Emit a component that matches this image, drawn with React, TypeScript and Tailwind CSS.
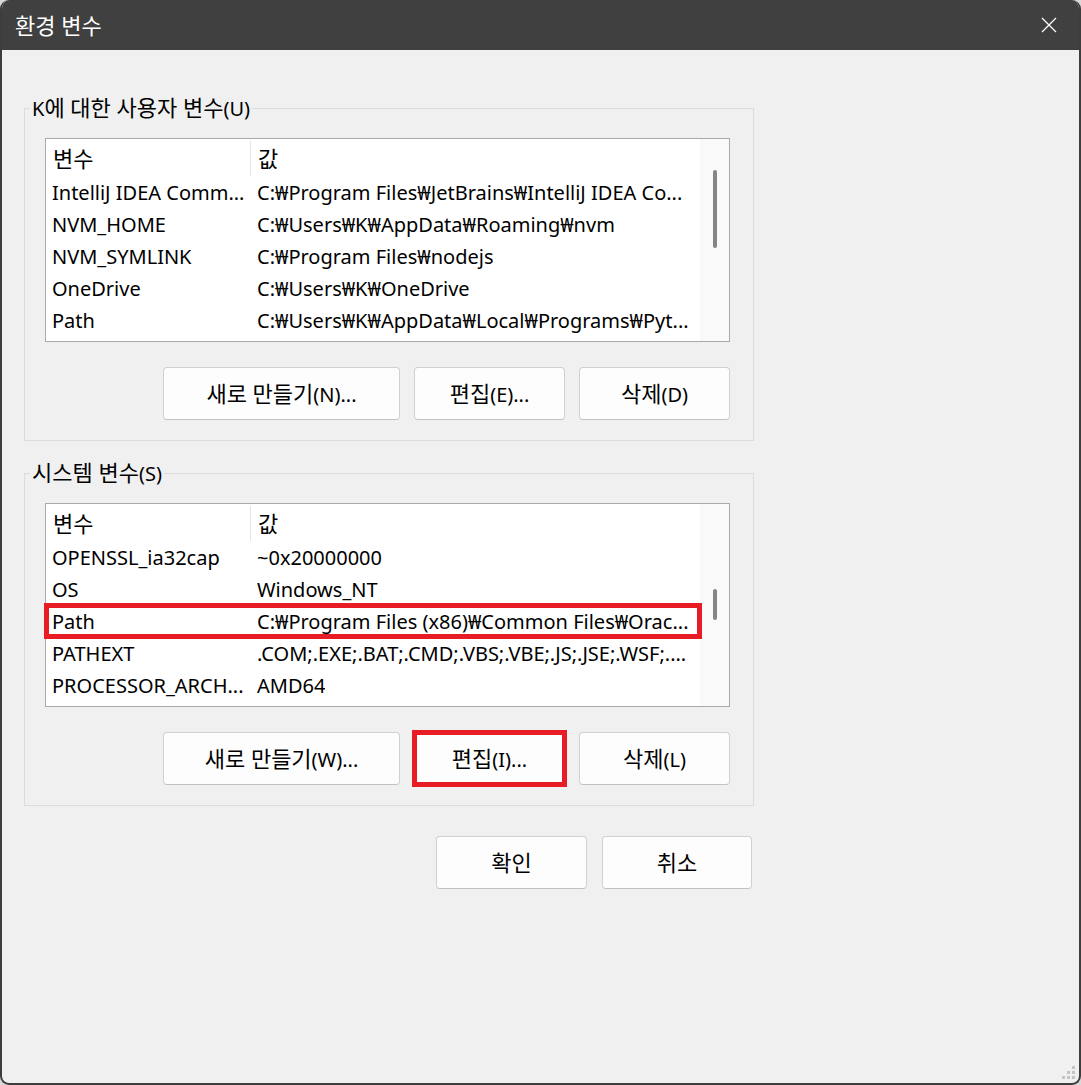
import React from 'react';

type Row = { name: string; value: string; selected?: boolean };

const USER_VARS: Row[] = [
  { name: 'IntelliJ IDEA Comm...', value: 'C:₩Program Files₩JetBrains₩IntelliJ IDEA Co...' },
  { name: 'NVM_HOME', value: 'C:₩Users₩K₩AppData₩Roaming₩nvm' },
  { name: 'NVM_SYMLINK', value: 'C:₩Program Files₩nodejs' },
  { name: 'OneDrive', value: 'C:₩Users₩K₩OneDrive' },
  { name: 'Path', value: 'C:₩Users₩K₩AppData₩Local₩Programs₩Pyt...' },
];

const SYSTEM_VARS: Row[] = [
  { name: 'OPENSSL_ia32cap', value: '~0x20000000' },
  { name: 'OS', value: 'Windows_NT' },
  { name: 'Path', value: 'C:₩Program Files (x86)₩Common Files₩Orac...', selected: true },
  { name: 'PATHEXT', value: '.COM;.EXE;.BAT;.CMD;.VBS;.VBE;.JS;.JSE;.WSF;....' },
  { name: 'PROCESSOR_ARCH...', value: 'AMD64' },
];

const FONT = { fontFamily: '"Noto Sans", "Noto Sans CJK KR", sans-serif' };

// Hangul in the original font is noticeably larger than its Latin, so Korean runs get a bigger size
const Ko = ({ children }: { children: React.ReactNode }) => <span className="text-[22px]">{children}</span>;

const VarList = ({ rows, thumbTop, thumbHeight }: { rows: Row[]; thumbTop: string; thumbHeight: string }) => (
  <div className="flex h-[204px] w-[685px] border border-[#a9a9a9] bg-white">
    {/* scrollbar first in DOM order is avoided; the list column is raised so the red frame stays on top */}
    <div className="relative z-10 flex-1">
      {/* header */}
      <div className="flex h-[37px] items-center pt-[2px]">
        <div className="flex h-full w-[205px] items-center border-r border-[#e5e5e5] pl-[7px]">
          <Ko>변수</Ko>
        </div>
        <div className="pl-[7px]">
          <Ko>값</Ko>
        </div>
      </div>
      {rows.map((r, i) => (
        <div
          key={i}
          className={`flex h-[32px] items-center whitespace-nowrap pt-[1px] ${
            r.selected ? 'shadow-[0_0_0_2px_#e81c24,inset_0_0_0_3px_#e81c24]' : ''
          }`}
        >
          <div className="w-[205px] overflow-hidden pl-[6px]">{r.name}</div>
          <div className="overflow-hidden pl-[6px]">{r.value}</div>
        </div>
      ))}
    </div>
    {/* scrollbar */}
    <div className="relative w-[29px] bg-[#f9f9f9]">
      <div className={`absolute left-[13px] w-[4px] rounded-full bg-[#858585] ${thumbTop} ${thumbHeight}`}></div>
    </div>
  </div>
);

const Btn = ({ children, w, highlight }: { children: React.ReactNode; w: string; highlight?: boolean }) => (
  <button
    className={`${w} h-[53px] border bg-[#fdfdfd] text-[20px] text-black ${
      highlight
        ? 'border-[#e81c24] shadow-[0_0_0_2px_#e81c24,inset_0_0_0_2px_#e81c24]'
        : 'rounded-[4px] border-[#d0d0d0] border-b-[#c2c2c2]'
    }`}
  >
    {children}
  </button>
);

const Group = ({
  title,
  rows,
  thumbTop,
  thumbHeight,
  buttons,
}: {
  title: React.ReactNode;
  rows: Row[];
  thumbTop: string;
  thumbHeight: string;
  buttons: React.ReactNode;
}) => (
  <fieldset className="w-[730px] border border-[#dcdcdc] pb-[20px] pl-[20px] pr-[23px]">
    <legend className="-ml-[15px] px-[2px] text-[20px] leading-[26px]">{title}</legend>
    <div className="mt-[16px]">
      <VarList rows={rows} thumbTop={thumbTop} thumbHeight={thumbHeight} />
    </div>
    <div className="mt-[25px] flex justify-end gap-[14px]">{buttons}</div>
  </fieldset>
);

export default function App() {
  return (
    <div className="h-[1085px] w-[1081px] bg-[#d9d9d9]" style={FONT}>
      <div className="flex h-full w-full flex-col overflow-hidden rounded-[9px] border-2 border-t-0 border-[#3d3d3d] bg-[#f0f0f0] text-[20px] text-black">
        {/* title bar */}
        <div className="flex h-[50px] shrink-0 items-center justify-between bg-[#404040] pl-[13px] pr-[20px] text-white">
          <span className="text-[22px]">환경 변수</span>
          <svg width="16" height="16" viewBox="0 0 16 16" className="mr-[2px]">
            <path d="M1 1 L15 15 M15 1 L1 15" stroke="#ffffff" strokeWidth="1.3" />
          </svg>
        </div>

        <div className="relative flex flex-1 flex-col pl-[22px] pt-[44px]">
          <Group
            title={
              <>
                K<Ko>에 대한 사용자 변수</Ko>(U)
              </>
            }
            rows={USER_VARS}
            thumbTop="top-[31px]"
            thumbHeight="h-[78px]"
            buttons={
              <>
                <Btn w="w-[237px]">
                  <Ko>새로 만들기</Ko>(N)...
                </Btn>
                <Btn w="w-[151px]">
                  <Ko>편집</Ko>(E)...
                </Btn>
                <Btn w="w-[151px]">
                  <Ko>삭제</Ko>(D)
                </Btn>
              </>
            }
          />
          <div className="mt-[18px]">
            <Group
              title={
                <>
                  <Ko>시스템 변수</Ko>(S)
                </>
              }
              rows={SYSTEM_VARS}
              thumbTop="top-[85px]"
              thumbHeight="h-[31px]"
              buttons={
                <>
                  <Btn w="w-[237px]">
                    <Ko>새로 만들기</Ko>(W)...
                  </Btn>
                  <Btn w="w-[151px]" highlight>
                    <Ko>편집</Ko>(I)...
                  </Btn>
                  <Btn w="w-[151px]">
                    <Ko>삭제</Ko>(L)
                  </Btn>
                </>
              }
            />
          </div>
          <div className="mt-[30px] flex w-[728px] justify-end gap-[15px]">
            <Btn w="w-[151px]">
              <Ko>확인</Ko>
            </Btn>
            <Btn w="w-[150px]">
              <Ko>취소</Ko>
            </Btn>
          </div>

          {/* resize grip */}
          <svg width="14" height="14" viewBox="0 0 14 14" className="absolute bottom-[3px] right-[3px]">
            <rect x="10" y="0" width="3" height="3" fill="#c4c4c4" />
            <rect x="5" y="5" width="3" height="3" fill="#c4c4c4" />
            <rect x="10" y="5" width="3" height="3" fill="#c4c4c4" />
            <rect x="0" y="10" width="3" height="3" fill="#c4c4c4" />
            <rect x="5" y="10" width="3" height="3" fill="#c4c4c4" />
            <rect x="10" y="10" width="3" height="3" fill="#c4c4c4" />
          </svg>
        </div>
      </div>
    </div>
  );
}
